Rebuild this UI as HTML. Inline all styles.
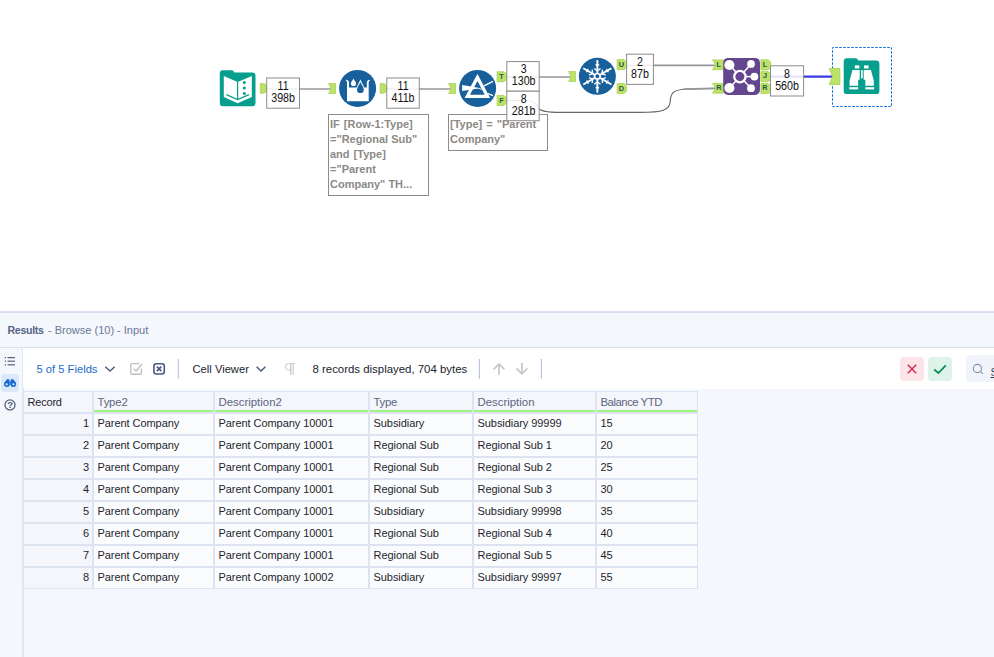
<!DOCTYPE html>
<html>
<head>
<meta charset="utf-8">
<title>Results - Browse (10) - Input</title>
<style>
html,body{margin:0;padding:0;}
body{width:994px;height:657px;overflow:hidden;background:#fff;position:relative;font-family:"Liberation Sans",sans-serif;}
.abs{position:absolute;}
#canvas{position:absolute;left:0;top:0;width:994px;height:311px;background:#fff;overflow:hidden;}
.lbl{position:absolute;box-sizing:border-box;border:1px solid #8e8e8e;background:#fff;font:12px/12px "Liberation Sans",sans-serif;color:#111;text-align:center;white-space:nowrap;}
.lbl span{display:block;}
.ann{position:absolute;box-sizing:border-box;border:1px solid #8c8c8c;background:#fff;font:bold 11px/15.1px "Liberation Sans",sans-serif;color:#8b8986;white-space:nowrap;padding:2px 0 0 1px;overflow:hidden;}
.ann span{word-spacing:1px;}
.anc{position:absolute;font:bold 8px/10px "Liberation Sans",sans-serif;color:#2d5a27;text-align:center;}
#panel{position:absolute;left:0;top:311px;width:994px;height:346px;background:#f4f7fc;}
#ptop{position:absolute;left:0;top:0;width:994px;height:2px;background:#d9dfee;}
#title{position:absolute;left:7.5px;top:11px;font:11px/16px "Liberation Sans",sans-serif;color:#6a7799;white-space:nowrap;}
#title b{color:#56648a;margin-right:1.3px;font-size:10.6px;letter-spacing:-0.3px;}
#sep{position:absolute;left:0;top:36px;width:994px;height:1px;background:#dbe1ef;}
#vline{position:absolute;left:22px;top:37px;width:2px;height:309px;background:#e2e7f3;}
#bino{position:absolute;left:1px;top:63px;width:18px;height:18px;border-radius:3px;background:#dbe8fa;}
#toolbar{position:absolute;left:23px;top:37px;width:971px;height:41px;background:#fff;border-bottom-left-radius:4px;font:11.2px/16px "Liberation Sans",sans-serif;color:#20242e;white-space:nowrap;}
#toolbar .t{position:absolute;top:12.5px;}
.btn{position:absolute;width:24px;height:24px;border-radius:4px;}
#search{position:absolute;left:943px;top:7px;width:40px;height:27px;border-radius:4px;background:#f1f4fa;}
#search span{position:absolute;left:24.5px;top:9px;text-decoration:underline;color:#333a4d;}
table{position:absolute;left:23px;top:80px;border-collapse:separate;border-spacing:0;table-layout:fixed;font:11px/18.4px "Liberation Sans",sans-serif;color:#1d1f2b;letter-spacing:-0.06px;}
td,th{box-sizing:border-box;border:0 solid #dde3f0;border-right-width:2px;border-bottom-width:2px;height:22px;padding:0 0 0 3.5px;text-align:left;font-weight:normal;white-space:nowrap;overflow:hidden;background:#fbfcfe;vertical-align:top;}
th{background:#f4f6fb;color:#5d6580;position:relative;font-size:11.4px;line-height:20px;letter-spacing:0;height:23px;border-top-width:1px;}
td:first-child,th:first-child{border-left-width:1px;}
td:last-child,th:last-child{border-right-width:1px;}
tr:last-child td{border-bottom-width:1px;height:21px;}
th.rec{color:#22242e;font-size:11px;letter-spacing:-0.2px;}
th.g:after{content:"";position:absolute;left:0;right:0;bottom:0;height:2px;background:#9df680;}
td.r{text-align:right;padding:0 3px 0 0;background:#f4f6fb;}
</style>
</head>
<body>
<div id="canvas">
<svg class="abs" style="left:0;top:0" width="994" height="311" viewBox="0 0 994 311">
  <g fill="none" stroke="#969696" stroke-width="1.7">
    <path d="M266 89 H331"/>
    <path d="M386 89 H451"/>
    <path d="M506 77 H571"/>
    <path d="M626 65.4 H715.6"/>
  </g>
  <path d="M506 100.5 H524 C533 100.5 537 102 537.5 106.5 C538 111 546 112.4 562 112.4 H640 C662 112.4 670 110.5 670.3 101 C670.6 91.5 675 89.5 688 89 L715.6 88.4" fill="none" stroke="#666" stroke-width="1.15"/>
  <path d="M684 89.15 L715.6 88.4" fill="none" stroke="#969696" stroke-width="1.7"/>
  <path d="M771 76.7 H832" fill="none" stroke="#3b3be3" stroke-width="2.2"/>
</svg>
<div class="ann" style="left:328px;top:114px;width:101px;height:82px;"><span>IF [Row-1:Type]</span><br>=&quot;Regional Sub&quot;<br><span>and [Type]</span><br>=&quot;Parent<br>Company&quot; TH...</div>
<div class="ann" style="left:448px;top:114px;width:100px;height:37px;word-spacing:1px;">[Type] = &quot;Parent<br>Company&quot;</div>
<svg class="abs" style="left:0;top:0" width="994" height="311" viewBox="0 0 994 311">
<g fill="#bce268" stroke="#a8d054" stroke-width="0.8">
<path d="M260.3 83.6 H263.1 Q266.3 83.6 266.3 86.8 V89.99999999999999 Q266.3 93.19999999999999 263.1 93.19999999999999 H260.3 Z"/>
<path d="M328.6 83.6 H335.6 V93.39999999999999 H328.6 L331.20000000000005 88.5 Z"/>
<path d="M380.2 83.6 H383.0 Q386.2 83.6 386.2 86.8 V89.99999999999999 Q386.2 93.19999999999999 383.0 93.19999999999999 H380.2 Z"/>
<path d="M448.6 83.6 H455.6 V93.39999999999999 H448.6 L451.20000000000005 88.5 Z"/>
<path d="M497.1 71.7 H504.00000000000006 L506.40000000000003 74.10000000000001 V79.39999999999999 L504.00000000000006 81.8 H497.1 Z"/>
<path d="M497.1 95.4 H504.00000000000006 L506.40000000000003 97.80000000000001 V103.1 L504.00000000000006 105.5 H497.1 Z"/>
<path d="M568.6 71.6 H575.6 V81.39999999999999 H568.6 L571.2 76.5 Z"/>
<path d="M617.2 59.6 H624.1 L626.5 62.0 V67.3 L624.1 69.7 H617.2 Z"/>
<path d="M617.2 83.5 H624.1 L626.5 85.9 V91.19999999999999 L624.1 93.6 H617.2 Z"/>
<path d="M712.5 59.9 H723.0 V69.7 H712.5 L715.7 64.8 Z"/>
<path d="M712.5 83.4 H723.0 V93.2 H712.5 L715.7 88.30000000000001 Z"/>
<path d="M760.9 59.8 H768.3 L770.6999999999999 62.199999999999996 V67.49999999999999 L768.3 69.89999999999999 H760.9 Z"/>
<path d="M760.9 71.6 H768.3 L770.6999999999999 74.0 V79.29999999999998 L768.3 81.69999999999999 H760.9 Z"/>
<path d="M760.9 83.5 H768.3 L770.6999999999999 85.9 V91.19999999999999 L768.3 93.6 H760.9 Z"/>
</g>
<g font-family="Liberation Sans, sans-serif" font-size="12" fill="#111" text-anchor="middle">
<rect x="266.70" y="78.00" width="32.80" height="30.20" fill="#fff" fill-opacity="0.86" stroke="#8c8c8c" stroke-width="1"/><text transform="translate(283.10 89.50) scale(0.89 1)">11</text><text transform="translate(283.10 101.70) scale(0.89 1)">398b</text>
<rect x="386.80" y="78.00" width="32.50" height="30.20" fill="#fff" fill-opacity="0.86" stroke="#8c8c8c" stroke-width="1"/><text transform="translate(403.05 89.50) scale(0.89 1)">11</text><text transform="translate(403.05 101.70) scale(0.89 1)">411b</text>
<rect x="506.80" y="61.60" width="32.40" height="29.60" fill="#fff" fill-opacity="0.86" stroke="#8c8c8c" stroke-width="1"/><text transform="translate(523.70 72.70) scale(0.89 1)">3</text><text transform="translate(523.70 84.90) scale(0.89 1)">130b</text>
<rect x="506.80" y="91.20" width="32.40" height="29.50" fill="#fff" fill-opacity="0.86" stroke="#8c8c8c" stroke-width="1"/><text transform="translate(523.70 102.95) scale(0.89 1)">8</text><text transform="translate(523.70 115.15) scale(0.89 1)">281b</text>
<rect x="626.60" y="54.20" width="26.80" height="30.20" fill="#fff" fill-opacity="0.86" stroke="#8c8c8c" stroke-width="1"/><text transform="translate(640.00 65.70) scale(0.89 1)">2</text><text transform="translate(640.00 77.90) scale(0.89 1)">87b</text>
<rect x="770.50" y="65.80" width="33.10" height="30.20" fill="#fff" fill-opacity="0.86" stroke="#8c8c8c" stroke-width="1"/><text transform="translate(787.05 78.10) scale(0.89 1)">8</text><text transform="translate(787.05 90.30) scale(0.89 1)">560b</text>
</g>
<g font-family="Liberation Sans, sans-serif" font-size="7.3" font-weight="bold" fill="#27564a" text-anchor="middle">
<text x="501.4" y="79.4">T</text>
<text x="501.4" y="103">F</text>
<text x="621.4" y="67.4">U</text>
<text x="621.4" y="91.2">D</text>
<text x="718.8" y="66.6">L</text>
<text x="718.8" y="90.2">R</text>
<text x="765.0" y="66.6">L</text>
<text x="765.0" y="78.3">J</text>
<text x="765.0" y="90.2">R</text>
</g>
<g>
  <path d="M223 70.2 H231.5 Q233 70.2 233.8 71.4 L234.4 72.4 H252.3 Q255.5 72.4 255.5 75.6 V103 Q255.5 106.2 252.3 106.2 H223 Q219.8 106.2 219.8 103 V73.4 Q219.8 70.2 223 70.2 Z" fill="#069e8d"/>
  <path d="M223.8 76 L237.6 82 L251.8 76 V97 L237.6 103.2 L223.8 97 Z" fill="#fff"/>
  <path d="M237.6 82 V99.6" stroke="#069e8d" stroke-width="1.2" fill="none"/>
  <path d="M226.4 94.6 L237.6 99.6 L249 94.6" stroke="#069e8d" stroke-width="1.2" fill="none"/>
  <circle cx="244.3" cy="82.5" r="1.5" fill="#069e8d"/>
  <circle cx="244.3" cy="88" r="1.5" fill="#069e8d"/>
  <circle cx="244.3" cy="93.4" r="1.5" fill="#069e8d"/>
</g>
<g>
  <circle cx="357.6" cy="88.4" r="18.5" fill="#17609b"/>
  <path d="M345.8 80.5 Q346.4 79.7 347.3 79.9 Q349 80.5 349 82.4 V87.6 H356.6 L360.4 79.6 L364.2 87.6 H366.8 V82.4 Q366.8 80.5 368.5 79.9 Q369.4 79.7 370 80.5 Q368.7 81.2 368.7 82.6 V101.2 H347 V82.6 Q347 81.2 345.8 80.5 Z" fill="#fff"/>
  <path d="M353.5 78.4 C 354.5 80.4 356.1 81.9 356.1 83.4 A2.6 2.6 0 0 1 350.9 83.4 C 350.9 81.9 352.5 80.4 353.5 78.4 Z" fill="#fff"/>
  <path d="M360.4 82 C 361.6 85 363.8 87.4 363.8 89.7 A3.4 3.4 0 0 1 357 89.7 C 357 87.4 359.2 85 360.4 82 Z" fill="#17609b"/>
</g>
<g>
  <circle cx="477.6" cy="88.4" r="18.5" fill="#17609b"/>
  <path d="M477.5 77.4 L467.3 96.3 H487.4 Z" fill="none" stroke="#fff" stroke-width="3.3" stroke-linejoin="miter"/>
  <path d="M462.1 85 L478.2 87.8 V88.6 L462.1 91 Z" fill="#fff"/>
  <path d="M478 88.2 Q480 88.4 481.8 89.5" stroke="#fff" stroke-width="0.9" fill="none"/>
  <path d="M484 85.8 L493 81.4" stroke="#fff" stroke-width="1.5" fill="none"/>
  <path d="M487.4 93.3 L493 95.6" stroke="#fff" stroke-width="1.3" fill="none"/>
</g>
<g><circle cx="597.35" cy="76.35" r="18.5" fill="#17609b"/><g stroke="#fff" stroke-width="1.9" fill="none" stroke-linecap="butt"><path d="M597.35 72.95 L597.35 60.05"/><path d="M597.35 70.95 L594.20 68.49" stroke-width="1.35"/><path d="M597.35 70.95 L600.50 68.49" stroke-width="1.35"/><path d="M597.35 65.75 L595.62 64.40" stroke-width="1.35"/><path d="M597.35 65.75 L599.08 64.40" stroke-width="1.35"/><path d="M594.41 74.65 L583.23 68.20"/><path d="M592.67 73.65 L588.96 75.15" stroke-width="1.35"/><path d="M592.67 73.65 L592.12 69.69" stroke-width="1.35"/><path d="M588.17 71.05 L586.13 71.87" stroke-width="1.35"/><path d="M588.17 71.05 L587.86 68.87" stroke-width="1.35"/><path d="M594.41 78.05 L583.23 84.50"/><path d="M592.67 79.05 L592.12 83.01" stroke-width="1.35"/><path d="M592.67 79.05 L588.96 77.55" stroke-width="1.35"/><path d="M588.17 81.65 L587.86 83.83" stroke-width="1.35"/><path d="M588.17 81.65 L586.13 80.83" stroke-width="1.35"/><path d="M597.35 79.75 L597.35 92.65"/><path d="M597.35 81.75 L600.50 84.21" stroke-width="1.35"/><path d="M597.35 81.75 L594.20 84.21" stroke-width="1.35"/><path d="M597.35 86.95 L599.08 88.30" stroke-width="1.35"/><path d="M597.35 86.95 L595.62 88.30" stroke-width="1.35"/><path d="M600.29 78.05 L611.47 84.50"/><path d="M602.03 79.05 L605.74 77.55" stroke-width="1.35"/><path d="M602.03 79.05 L602.58 83.01" stroke-width="1.35"/><path d="M606.53 81.65 L608.57 80.83" stroke-width="1.35"/><path d="M606.53 81.65 L606.84 83.83" stroke-width="1.35"/><path d="M600.29 74.65 L611.47 68.20"/><path d="M602.03 73.65 L602.58 69.69" stroke-width="1.35"/><path d="M602.03 73.65 L605.74 75.15" stroke-width="1.35"/><path d="M606.53 71.05 L606.84 68.87" stroke-width="1.35"/><path d="M606.53 71.05 L608.57 71.87" stroke-width="1.35"/></g><circle cx="597.35" cy="76.35" r="2.85" fill="#17609b" stroke="#fff" stroke-width="1.7"/></g>
<g>
  <rect x="723.2" y="57.9" width="36.8" height="37" rx="5" fill="#63468e"/>
  <g stroke="#fff" stroke-width="1.5" fill="none">
    <path d="M739.9 76.6 L729.5 64.8"/><path d="M739.9 76.6 L729.5 88.2"/>
    <path d="M739.9 76.6 L751 63.9"/><path d="M739.9 76.6 L754.4 76.6"/><path d="M739.9 76.6 L751 88.2"/>
  </g>
  <circle cx="729.4" cy="65" r="5.1" fill="#fff"/>
  <circle cx="729.4" cy="88" r="5.1" fill="#fff"/>
  <circle cx="751" cy="63.9" r="3.9" fill="#fff"/>
  <circle cx="754.4" cy="76.6" r="3.9" fill="#fff"/>
  <circle cx="751" cy="88.2" r="3.9" fill="#fff"/>
  <circle cx="739.9" cy="76.6" r="5.7" fill="#63468e" stroke="#fff" stroke-width="2.3"/>
</g>
<g>
  <rect x="832.5" y="47.5" width="59" height="59" fill="none" stroke="#1272de" stroke-width="1" stroke-dasharray="2.6 1.4" stroke-dashoffset="1.3"/>
  <path d="M847 58.3 H855.4 Q856.9 58.3 857.6 59.5 L858.3 60.6 H876.2 Q879.4 60.6 879.4 63.8 V90.9 Q879.4 94.1 876.2 94.1 H847 Q843.7 94.1 843.7 90.9 V61.5 Q843.7 58.3 847 58.3 Z" fill="#069e8d"/>
  <g fill="#fff">
    <rect x="854.8" y="65.4" width="4.55" height="3.1"/>
    <rect x="864" y="65.4" width="4.6" height="3.1"/>
    <path d="M852.5 69.9 H859.7 V79.7 H858.1 V85.8 H849.6 V80.6 Z"/>
    <path d="M870.9 69.9 H863.7 V79.7 H865.3 V85.8 H873.8 V80.6 Z"/>
    <rect x="849.3" y="87.2" width="8.8" height="2.2"/>
    <rect x="865.3" y="87.2" width="8.8" height="2.2"/>
    <rect x="861" y="70.3" width="1.7" height="7.9"/>
  </g>
</g>
<g fill="#bce268" stroke="#a8d054" stroke-width="0.8"><path d="M829.2 68.4 H839.9000000000001 V84.4 H829.2 L832.6 76.4 Z"/></g>
</svg>
</div>

<div id="panel">
  <div id="ptop"></div>
  <div id="title"><b>Results</b> - Browse (10) - Input</div>
  <div id="sep"></div>
  <div id="vline"></div>
  <div id="toolbar">
    <span class="t" id="t1" style="left:13.5px;color:#1a6bc9;">5 of 5 Fields</span>
    <span class="t" id="t2" style="left:169.5px;">Cell Viewer</span>
    <span class="t" id="t3" style="left:289.5px;font-size:11.42px;">8 records displayed, 704 bytes</span>
    <div class="btn" style="left:877px;top:9px;background:#fde4e8;"></div>
    <div class="btn" style="left:905px;top:9px;background:#def3ea;"></div>
    <div id="search"><span>S</span></div>
  </div>
  <div id="bino"></div>
  <svg class="abs" style="left:0;top:0" width="994" height="346" viewBox="0 311 994 346">
    <!-- sidebar: list icon -->
    <g stroke="#55607c" stroke-width="1.2" fill="none">
      <path d="M7.6 357.6 H15"/><path d="M7.6 361.2 H15"/><path d="M7.6 364.8 H15"/>
      <path d="M4.8 357.6 H6"/><path d="M4.8 361.2 H6"/><path d="M4.8 364.8 H6"/>
    </g>
    <!-- sidebar: binoculars -->
    <g fill="#1a6bd0">
      <circle cx="6.9" cy="384.1" r="2.9"/><circle cx="13.3" cy="384.1" r="2.9"/>
      <path d="M4.6 382.8 L6.9 379.3 H9.4 V384.2 Z"/><path d="M15.6 382.8 L13.3 379.3 H10.8 V384.2 Z"/>
      <rect x="9" y="381.4" width="2.2" height="3"/>
    </g>
    <circle cx="6.7" cy="384.3" r="1.15" fill="#dbe8fa"/><circle cx="13.5" cy="384.3" r="1.15" fill="#dbe8fa"/>
    <rect x="9.4" y="382.6" width="1.4" height="0.8" fill="#9fc2ee"/>
    <!-- sidebar: help -->
    <circle cx="10" cy="404.9" r="5.05" fill="none" stroke="#55607c" stroke-width="1.25"/>
    <text x="10.1" y="408.4" font-family="Liberation Sans, sans-serif" font-size="9.6" font-weight="bold" fill="#55607c" text-anchor="middle">?</text>
    <!-- toolbar chevrons -->
    <g fill="none" stroke="#4d5b7c" stroke-width="1.5">
      <path d="M105.3 366.8 L110 371 L114.7 366.8"/>
      <path d="M256.6 366.8 L261 371 L265.4 366.8"/>
    </g>
    <!-- check (disabled) -->
    <g fill="none" stroke="#bfbfbf" stroke-width="1.35">
      <path d="M139.6 363.6 H132 Q130.8 363.6 130.8 364.8 V373 Q130.8 374.2 132 374.2 H140.2 Q141.4 374.2 141.4 373 V368.4"/>
      <path d="M133.6 368.8 L136.2 371 L142 364"/>
    </g>
    <!-- x box -->
    <rect x="153.9" y="363.8" width="10.4" height="10.2" rx="2.4" fill="none" stroke="#4b5a80" stroke-width="1.6"/>
    <path d="M156.9 366.7 L161.3 371.1 M161.3 366.7 L156.9 371.1" stroke="#4b5a80" stroke-width="1.7" fill="none"/>
    <!-- dividers -->
    <g stroke="#b7c2db" stroke-width="1.1">
      <path d="M178.3 359 V378.8"/><path d="M479.4 359 V378.8"/><path d="M541.4 359 V378.8"/>
    </g>
    <!-- pilcrow -->
    <g fill="none" stroke="#c9c9c9" stroke-width="1">
      <path d="M294.8 363.6 H288.6 A3.2 3.2 0 0 0 288.6 370 H290.4"/>
      <path d="M290.6 363.6 V374.8"/><path d="M293.3 363.6 V374.8"/>
      <path d="M291.6 363.6 V374.8" stroke="#dedede"/>
    </g>
    <!-- arrows -->
    <g fill="none" stroke="#c6c6c6" stroke-width="1.7">
      <path d="M499 374.7 V364"/><path d="M493.6 369.4 L499 364 L504.4 369.4"/>
      <path d="M521.9 363 V373.8"/><path d="M516.4 368.4 L521.9 373.9 L527.4 368.4"/>
    </g>
    <!-- red x / green check -->
    <path d="M907.8 364.8 L916.2 373.2 M916.2 364.8 L907.8 373.2" stroke="#d6334d" stroke-width="1.6" fill="none"/>
    <path d="M934.2 369.5 L938.4 373 L945.8 365.3" stroke="#0d8a5e" stroke-width="1.8" fill="none"/>
    <!-- search icon -->
    <circle cx="977.4" cy="368.5" r="4.1" fill="none" stroke="#8290b0" stroke-width="1.1"/>
    <path d="M980.4 371.4 L982.8 373.8" stroke="#8290b0" stroke-width="1.1"/>
  </svg>
  <table>
    <colgroup><col style="width:71px"><col style="width:121px"><col style="width:155px"><col style="width:104px"><col style="width:123px"><col style="width:101px"></colgroup>
    <tr><th class="rec">Record</th><th class="g" style="letter-spacing:-0.2px">Type2</th><th class="g">Description2</th><th class="g" style="letter-spacing:-0.3px">Type</th><th class="g">Description</th><th class="g" style="letter-spacing:-0.5px">Balance YTD</th></tr>
    <tr><td class="r">1</td><td>Parent Company</td><td>Parent Company 10001</td><td>Subsidiary</td><td>Subsidiary 99999</td><td>15</td></tr>
    <tr><td class="r">2</td><td>Parent Company</td><td>Parent Company 10001</td><td>Regional Sub</td><td>Regional Sub 1</td><td>20</td></tr>
    <tr><td class="r">3</td><td>Parent Company</td><td>Parent Company 10001</td><td>Regional Sub</td><td>Regional Sub 2</td><td>25</td></tr>
    <tr><td class="r">4</td><td>Parent Company</td><td>Parent Company 10001</td><td>Regional Sub</td><td>Regional Sub 3</td><td>30</td></tr>
    <tr><td class="r">5</td><td>Parent Company</td><td>Parent Company 10001</td><td>Subsidiary</td><td>Subsidiary 99998</td><td>35</td></tr>
    <tr><td class="r">6</td><td>Parent Company</td><td>Parent Company 10001</td><td>Regional Sub</td><td>Regional Sub 4</td><td>40</td></tr>
    <tr><td class="r">7</td><td>Parent Company</td><td>Parent Company 10001</td><td>Regional Sub</td><td>Regional Sub 5</td><td>45</td></tr>
    <tr><td class="r">8</td><td>Parent Company</td><td>Parent Company 10002</td><td>Subsidiary</td><td>Subsidiary 99997</td><td>55</td></tr>
  </table>
</div>
</body>
</html>
